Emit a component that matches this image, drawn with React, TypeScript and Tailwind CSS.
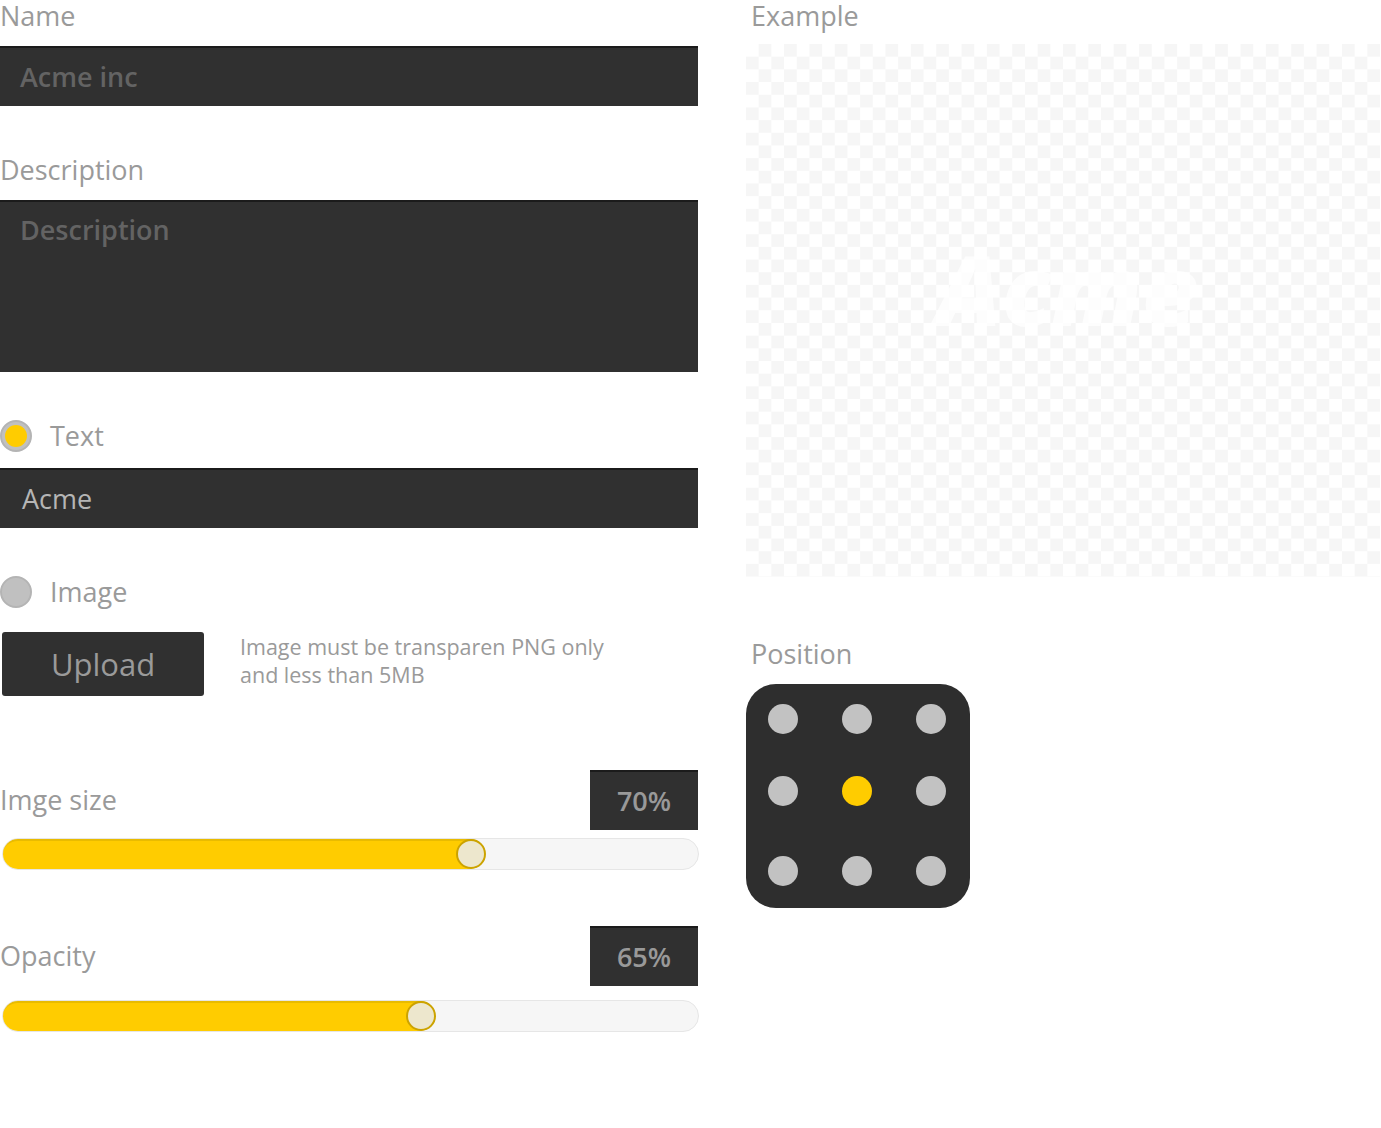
import React from "react";

const font = { fontFamily: '"Open Sans", "Noto Sans", sans-serif' };

function Label({ children }: { children: React.ReactNode }) {
  return (
    <div className="h-[32px] leading-[32px] text-[27px] text-[#9a9a9a] whitespace-nowrap">
      {children}
    </div>
  );
}

function Slider({ pos }: { pos: number }) {
  return (
    <div className="ml-[2px] w-[697px] h-[32px] rounded-full bg-[#f6f6f6] border border-[#e6e6e6] relative">
      <div
        className="h-full rounded-full bg-[#ffcc00] border-t-2 border-[#e9bb00]"
        style={{ width: pos + 14 }}
      />
      <div
        className="absolute top-[0px] w-[30px] h-[30px] rounded-full bg-[#ede7cd] border-2 border-[#cca300]"
        style={{ left: pos - 15 }}
      />
    </div>
  );
}

function Dot({ active }: { active?: boolean }) {
  return (
    <div className="w-[74px] flex justify-center">
      <div
        className={
          active
            ? "w-[30px] h-[30px] rounded-full bg-[#ffcc00]"
            : "w-[30px] h-[30px] rounded-full bg-[#c2c2c2]"
        }
      />
    </div>
  );
}

export default function App() {
  return (
    <div className="w-[1381px] h-[1128px] bg-white flex" style={font}>
      {/* left column */}
      <div className="w-[698px] flex flex-col">
        <Label>Name</Label>
        <div className="mt-[14px] h-[60px] bg-[#303030] border-t-2 border-[#1b1b1b] flex items-center pl-[20px]">
          <span className="text-[27px] font-semibold text-[#636363]">Acme inc</span>
        </div>

        <div className="mt-[48px]">
          <Label>Description</Label>
        </div>
        <div className="mt-[14px] h-[172px] bg-[#303030] border-t-2 border-[#1b1b1b] pl-[20px] pt-[10px]">
          <span className="text-[27px] font-semibold text-[#636363] leading-[36px]">Description</span>
        </div>

        <div className="mt-[48px] h-[32px] flex items-center">
          <div className="w-[32px] h-[32px] rounded-full bg-[#c0c0c0] border-2 border-[#b4b4b4] flex items-center justify-center">
            <div className="w-[22px] h-[22px] rounded-full bg-[#ffcc00]" />
          </div>
          <div className="ml-[18px]">
            <Label>Text</Label>
          </div>
        </div>
        <div className="mt-[16px] h-[60px] bg-[#303030] border-t-2 border-[#1b1b1b] flex items-center pl-[22px]">
          <span className="text-[27px] text-[#b5b5b5]">Acme</span>
        </div>

        <div className="mt-[48px] h-[32px] flex items-center">
          <div className="w-[32px] h-[32px] rounded-full bg-[#c0c0c0] border-2 border-[#b4b4b4]" />
          <div className="ml-[18px]">
            <Label>Image</Label>
          </div>
        </div>

        <div className="mt-[24px] flex">
          <div className="ml-[2px] w-[202px] h-[64px] rounded-[3px] bg-[#303030] flex items-center justify-center">
            <span className="text-[31px] text-[#9a9a9a]">Upload</span>
          </div>
          <div className="ml-[36px] pt-[1px] text-[21.5px] leading-[28px] text-[#9a9a9a]">
            Image must be transparen PNG only
            <br />
            and less than 5MB
          </div>
        </div>

        <div className="mt-[74px] h-[60px] flex items-center justify-between">
          <Label>Imge size</Label>
          <div className="w-[108px] h-[60px] bg-[#303030] border-t-2 border-[#1b1b1b] flex items-center justify-center">
            <span className="text-[27px] font-semibold text-[#999]">70%</span>
          </div>
        </div>
        <div className="mt-[8px]">
          <Slider pos={468} />
        </div>

        <div className="mt-[56px] h-[60px] flex items-center justify-between">
          <Label>Opacity</Label>
          <div className="w-[108px] h-[60px] bg-[#303030] border-t-2 border-[#1b1b1b] flex items-center justify-center">
            <span className="text-[27px] font-semibold text-[#999]">65%</span>
          </div>
        </div>
        <div className="mt-[14px]">
          <Slider pos={418} />
        </div>
      </div>

      {/* right column */}
      <div className="ml-[48px] w-[635px] flex flex-col">
        <div className="pl-[5px]">
          <Label>Example</Label>
        </div>
        <div className="mt-[12px] w-[634px] h-[533px] bg-[conic-gradient(#f6f6f6_0_25%,#ffffff_0_50%,#f6f6f6_0_75%,#ffffff_0)] bg-size-[25.36px_25.36px] flex items-center justify-center pb-[46px] pl-[8px]">
          <span className="text-[98px] font-extrabold italic text-white/80 leading-none">Acme</span>
        </div>

        <div className="mt-[61px] pl-[5px]">
          <Label>Position</Label>
        </div>
        <div className="mt-[14px] w-[224px] h-[224px] rounded-[30px] bg-[#2e2e2e] flex flex-col">
          <div className="mt-[20px] flex">
            <Dot />
            <Dot />
            <Dot />
          </div>
          <div className="mt-[42px] flex">
            <Dot />
            <Dot active />
            <Dot />
          </div>
          <div className="mt-[50px] flex">
            <Dot />
            <Dot />
            <Dot />
          </div>
        </div>
      </div>
    </div>
  );
}
